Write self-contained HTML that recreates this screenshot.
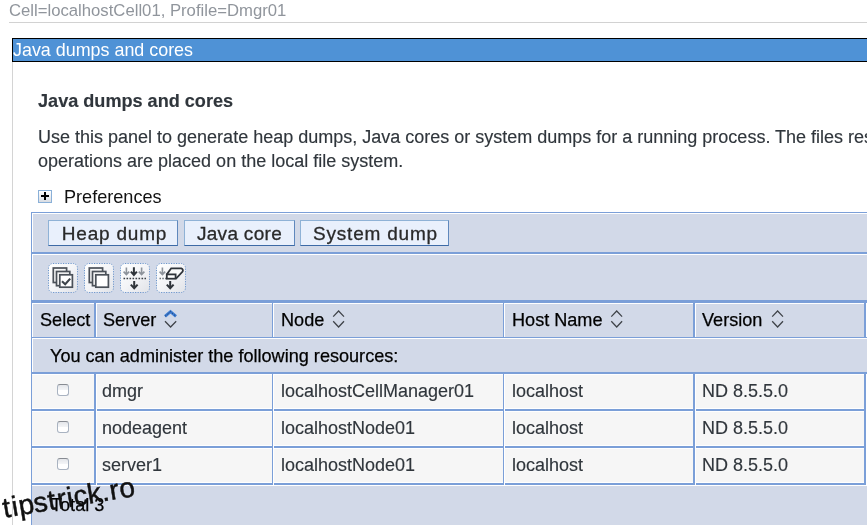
<!DOCTYPE html>
<html><head><meta charset="utf-8">
<style>
html,body{margin:0;padding:0;width:867px;height:525px;overflow:hidden;background:#fff;}
body{position:relative;font-family:"Liberation Sans",sans-serif;}
body>*{will-change:transform;}
.a{position:absolute;white-space:nowrap;}
.t18{font-size:18.1px;line-height:24px;}
.hd{-webkit-text-stroke:0.25px #000;}
.txt{-webkit-text-stroke:0.15px #30363c;}
.dt{font-size:18px;}
.bl{background:#7b9fd8;}
.wh{background:#fff;}
.fill{background:#d2d9e8;}
.row{background:#f6f6f6;}
.txt{color:#30363c;}
.hd{color:#000;}
.btn{position:absolute;top:220px;height:26px;box-sizing:border-box;border:1px solid #8fb2d6;border-bottom-color:#3d6aa6;border-right-color:#5f88bd;background:#e9f0fc;color:#2a2a2a;font-size:19px;line-height:26px;text-align:center;letter-spacing:0.8px;-webkit-text-stroke:0.3px #2a2a2a;}
.ico{position:absolute;top:263px;width:30px;height:30px;box-sizing:border-box;border:1px dotted #6d95c9;border-radius:5px;background:linear-gradient(#fbfcfe,#e2e4ea);}
.cb{position:absolute;left:57px;width:12px;height:12px;box-sizing:border-box;border:1px solid #a9b3c1;border-top-color:#878b92;border-radius:3px;background:linear-gradient(#e4e6ea,#f4f5f7 50%,#ffffff 55%);}
</style></head>
<body>
<!-- breadcrumb -->
<div class="a" style="left:8.5px;top:1px;font-size:16.7px;line-height:20px;color:#90959c;">Cell=localhostCell01, Profile=Dmgr01</div>
<div class="a" style="left:9px;top:22px;width:858px;height:1px;background:#d2d2d2;"></div>

<!-- title bar -->
<div class="a" style="left:12px;top:38px;width:900px;height:24px;box-sizing:border-box;border:1px solid #000;background:#4f92d6;"></div>
<div class="a t18" style="left:12.5px;top:39px;line-height:22px;color:#fff;font-size:17.9px;">Java dumps and cores</div>

<!-- left gray rule -->
<div class="a" style="left:12px;top:62px;width:1px;height:463px;background:#d4d4d4;"></div>

<div class="a t18 txt" style="left:38px;top:88.5px;font-weight:bold;">Java dumps and cores</div>
<div class="a t18 txt" style="left:38px;top:125.3px;font-size:18px;">Use this panel to generate heap dumps, Java cores or system dumps for a running process. The files resulting from these</div>
<div class="a t18 txt" style="left:38px;top:149px;font-size:18px;">operations are placed on the local file system.</div>

<!-- preferences -->
<div class="a" style="left:38px;top:190px;width:14px;height:13px;box-sizing:border-box;border:1px solid #8ab0d8;background:linear-gradient(#ffffff,#d9dde3);"></div>
<div class="a" style="left:41px;top:195px;width:8px;height:2px;background:#000;"></div>
<div class="a" style="left:44px;top:192px;width:2px;height:8px;background:#000;"></div>
<div class="a t18" style="left:63.5px;top:185.4px;color:#111;">Preferences</div>

<!-- table frame -->
<div class="a bl" style="left:31px;top:212px;width:836px;height:313px;"></div>
<div class="a wh" style="left:32px;top:213px;width:835px;height:312px;"></div>
<!-- button row -->
<div class="a fill" style="left:33px;top:214px;width:834px;height:38px;"></div>
<div class="a bl" style="left:32px;top:252px;width:835px;height:2px;"></div>
<!-- icon row -->
<div class="a fill" style="left:33px;top:255px;width:834px;height:45px;"></div>
<div class="a bl" style="left:32px;top:300px;width:835px;height:3px;"></div>
<!-- header row -->
<div class="a fill" style="left:33px;top:304px;width:834px;height:33px;"></div>
<div class="a bl" style="left:32px;top:337px;width:835px;height:1px;"></div>
<!-- group row -->
<div class="a fill" style="left:33px;top:339px;width:834px;height:33px;"></div>
<div class="a bl" style="left:32px;top:372px;width:835px;height:2px;"></div>
<!-- data rows -->
<div class="a row" style="left:32px;top:375px;width:835px;height:33px;"></div>
<div class="a bl" style="left:32px;top:409px;width:835px;height:2px;"></div>
<div class="a row" style="left:32px;top:412px;width:835px;height:33px;"></div>
<div class="a bl" style="left:32px;top:446px;width:835px;height:2px;"></div>
<div class="a row" style="left:32px;top:449px;width:835px;height:33px;"></div>
<div class="a bl" style="left:32px;top:483px;width:835px;height:2px;"></div>
<!-- footer -->
<div class="a fill" style="left:32px;top:486px;width:835px;height:39px;"></div>

<!-- column separators (header + data) -->
<div class="a bl" style="left:94px;top:303px;width:2px;height:35px;"></div>
<div class="a wh" style="left:96px;top:303px;width:1px;height:34px;"></div>
<div class="a bl" style="left:272px;top:303px;width:1px;height:35px;"></div>
<div class="a wh" style="left:273px;top:303px;width:1px;height:34px;"></div>
<div class="a bl" style="left:503px;top:303px;width:1px;height:35px;"></div>
<div class="a wh" style="left:504px;top:303px;width:1px;height:34px;"></div>
<div class="a bl" style="left:693px;top:303px;width:2px;height:35px;"></div>
<div class="a wh" style="left:695px;top:303px;width:1px;height:34px;"></div>
<div class="a bl" style="left:864px;top:303px;width:2px;height:35px;"></div>
<div class="a wh" style="left:866px;top:303px;width:1px;height:34px;"></div>

<div class="a bl" style="left:94px;top:374px;width:2px;height:111px;"></div>
<div class="a wh" style="left:96px;top:374px;width:1px;height:111px;"></div>
<div class="a bl" style="left:272px;top:374px;width:1px;height:111px;"></div>
<div class="a wh" style="left:273px;top:374px;width:1px;height:111px;"></div>
<div class="a bl" style="left:503px;top:374px;width:1px;height:111px;"></div>
<div class="a wh" style="left:504px;top:374px;width:1px;height:111px;"></div>
<div class="a bl" style="left:693px;top:374px;width:2px;height:111px;"></div>
<div class="a wh" style="left:695px;top:374px;width:1px;height:111px;"></div>
<div class="a bl" style="left:864px;top:374px;width:2px;height:111px;"></div>
<div class="a wh" style="left:866px;top:374px;width:1px;height:111px;"></div>

<!-- buttons -->
<div class="btn" style="left:48px;width:130px;padding-left:3px;">Heap dump</div>
<div class="btn" style="left:184px;width:111px;letter-spacing:0.3px;">Java core</div>
<div class="btn" style="left:300px;width:149px;padding-left:2px;">System dump</div>

<!-- icons -->
<svg class="a" style="left:0;top:0;" width="867" height="525">
<defs>
<linearGradient id="ig" x1="0" y1="0" x2="1" y2="1"><stop offset="0" stop-color="#ffffff"/><stop offset="0.5" stop-color="#f3f4f7"/><stop offset="1" stop-color="#e1e3e8"/></linearGradient>
</defs>
<g fill="url(#ig)" stroke="#6d96cc" stroke-width="1" stroke-dasharray="1.2 1.3">
<rect x="48.5" y="263.5" width="29" height="29" rx="4.5"/>
<rect x="84.5" y="263.5" width="29" height="29" rx="4.5"/>
<rect x="120.5" y="263.5" width="29" height="29" rx="4.5"/>
<rect x="156.5" y="263.5" width="29" height="29" rx="4.5"/>
</g>
<g stroke="#4b5159" stroke-width="1.7" fill="#f7f7f8">
<rect x="53.3" y="268" width="13.3" height="14.5"/>
<rect x="56.5" y="271.5" width="13.3" height="14.2"/>
<rect x="59.8" y="274.8" width="12.6" height="12.4" fill="#fff"/>
<rect x="89.3" y="268" width="13.3" height="14.5"/>
<rect x="92.5" y="271.5" width="13.3" height="14.2"/>
<rect x="95.8" y="274.8" width="12.6" height="12.4" fill="#fff"/>
</g>
<polyline points="62,281.3 65.2,284.3 70.2,278.6" fill="none" stroke="#3d434a" stroke-width="2.1"/>
<g fill="none" stroke-width="1.6">
<path d="M126.4,267.5V274.5M123.6,271.6L126.4,274.6L129.2,271.6" stroke="#8d939b"/>
<path d="M141.6,267.5V274.5M138.8,271.6L141.6,274.6L144.4,271.6" stroke="#8d939b"/>
<path d="M133.9,267.3V274.8M130.9,271.6L133.9,274.9L136.9,271.6" stroke="#2f343a" stroke-width="2"/>
<path d="M134.2,281V288M130.8,284.6L134.2,288.2L137.6,284.6" stroke="#2f343a" stroke-width="2"/>
<path d="M123.5,278.5H146" stroke="#3a3f45" stroke-width="1.7" stroke-dasharray="1.6 1.4"/>
<path d="M162.4,267.5V274.5M159.6,271.6L162.4,274.6L165.2,271.6" stroke="#8d939b"/>
<path d="M159.5,278.5H166.5" stroke="#6a7077" stroke-width="1.5" stroke-dasharray="1.5 1.3"/>
<path d="M170.2,281V288M166.8,284.6L170.2,288.2L173.6,284.6" stroke="#2f343a" stroke-width="2"/>
<path d="M166.8,274.4L171.2,268.3H181.2Q183.6,269.2 182.6,271.6L176,278.6" stroke="#2f343a" stroke-width="1.8" fill="#fafafa"/>
<rect x="166.8" y="274.4" width="8.8" height="4.3" stroke="#2f343a" stroke-width="1.8" fill="#fff"/>
</g>
<!-- sort chevrons -->
<g fill="none" stroke="#3e4248" stroke-width="1.25">
<polyline points="165,321.2 170.6,327 176.2,321.2"/>
<polyline points="333.2,316.6 338.6,311 344,316.6"/><polyline points="333.2,321.2 338.6,327 344,321.2"/>
<polyline points="611.3,316.6 616.7,311 622.1,316.6"/><polyline points="611.3,321.2 616.7,327 622.1,321.2"/>
<polyline points="772.2,316.6 777.6,311 783,316.6"/><polyline points="772.2,321.2 777.6,327 783,321.2"/>
</g>
<polyline points="165,316.4 170.5,311.6 176,316.4" fill="none" stroke="#3a7ad2" stroke-width="2.9"/>
<polyline points="165,316.4 170.5,311.6 176,316.4" fill="none" stroke="#1d3556" stroke-width="1" stroke-dasharray="0.9 1.5"/>
</svg>
<!-- header text -->
<div class="a t18 hd" style="left:40px;top:307.6px;">Select</div>
<div class="a t18 hd" style="left:103px;top:307.6px;">Server</div>
<div class="a t18 hd" style="left:281px;top:307.6px;">Node</div>
<div class="a t18 hd" style="left:512px;top:307.6px;">Host Name</div>
<div class="a t18 hd" style="left:702px;top:307.6px;">Version</div>

<!-- group row text -->
<div class="a t18 hd" style="left:50px;top:343.5px;">You can administer the following resources:</div>

<!-- data -->
<div class="cb" style="top:384px;"></div>
<div class="cb" style="top:421px;"></div>
<div class="cb" style="top:458px;"></div>
<div class="a t18 txt dt" style="left:101.8px;top:378.6px;">dmgr</div>
<div class="a t18 txt dt" style="left:280.8px;top:378.6px;">localhostCellManager01</div>
<div class="a t18 txt dt" style="left:511.5px;top:378.6px;">localhost</div>
<div class="a t18 txt dt" style="left:701.8px;top:378.6px;">ND 8.5.5.0</div>
<div class="a t18 txt dt" style="left:101.8px;top:415.6px;">nodeagent</div>
<div class="a t18 txt dt" style="left:280.8px;top:415.6px;">localhostNode01</div>
<div class="a t18 txt dt" style="left:511.5px;top:415.6px;">localhost</div>
<div class="a t18 txt dt" style="left:701.8px;top:415.6px;">ND 8.5.5.0</div>
<div class="a t18 txt dt" style="left:101.8px;top:452.6px;">server1</div>
<div class="a t18 txt dt" style="left:280.8px;top:452.6px;">localhostNode01</div>
<div class="a t18 txt dt" style="left:511.5px;top:452.6px;">localhost</div>
<div class="a t18 txt dt" style="left:701.8px;top:452.6px;">ND 8.5.5.0</div>

<!-- footer -->
<div class="a t18 hd" style="left:51px;top:493px;">Total 3</div>

<!-- watermark -->
<svg class="a" style="left:0;top:0;" width="867" height="525">
<text x="1.22 10.33 17.32 32.51 46.86 56.17 66.24 72.91 87.02 101.17 109.56 119.39" y="0" transform="translate(3,518) rotate(-9.4)" font-family="Liberation Sans" font-size="28" stroke="#111" stroke-width="0.5" fill="#111">tipstrick.ro</text>
</svg>
</body></html>
